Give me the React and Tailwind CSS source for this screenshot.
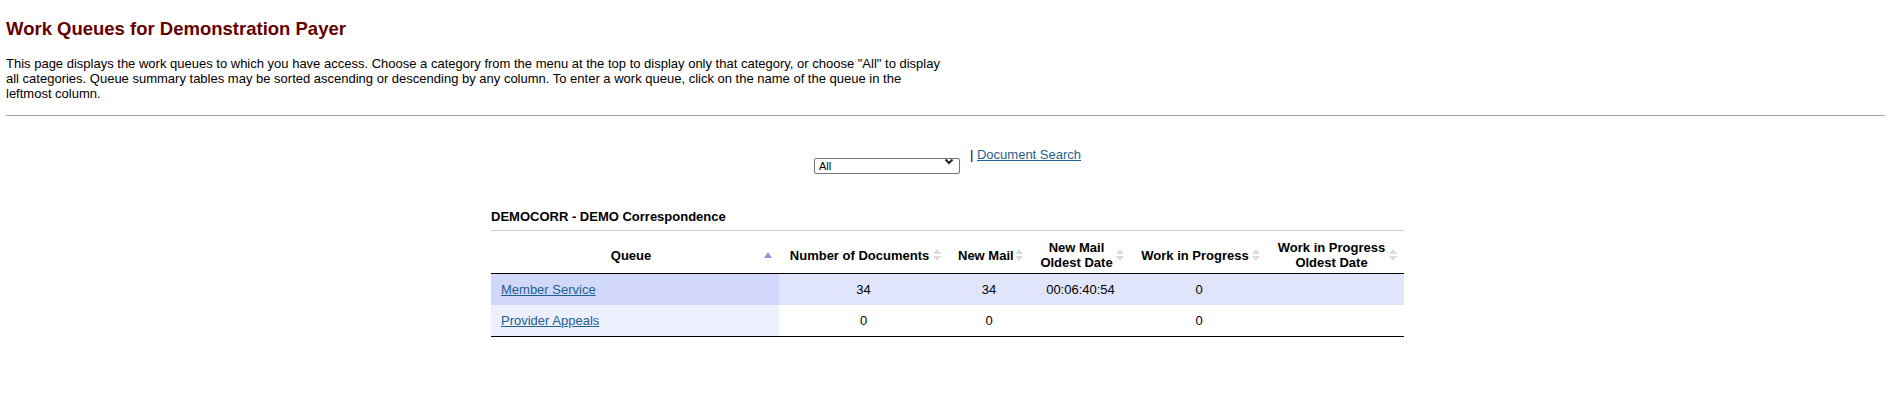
import React from "react";

const SortBoth = () => (
  <svg width="8" height="12" viewBox="0 0 8 12" className="shrink-0">
    <polygon points="4,0 8,5 0,5" fill="#dcdcdc" />
    <polygon points="0,7 8,7 4,12" fill="#dcdcdc" />
  </svg>
);

const SortAsc = () => (
  <svg width="8" height="6" viewBox="0 0 8 6" className="shrink-0">
    <polygon points="4,0 8,6 0,6" fill="#8a9bd4" />
  </svg>
);

const columns = [
  { label: ["Queue"], width: "w-[288px]", asc: true },
  { label: ["Number of Documents"], width: "w-[169px]" },
  { label: ["New Mail"], width: "w-[82px]" },
  { label: ["New Mail", "Oldest Date"], width: "w-[101px]" },
  { label: ["Work in Progress"], width: "w-[136px]" },
  { label: ["Work in Progress", "Oldest Date"], width: "w-[137px]" },
];

const rows = [
  { queue: "Member Service", docs: "34", mail: "34", oldest: "00:06:40:54", wip: "0", wipOldest: "" },
  { queue: "Provider Appeals", docs: "0", mail: "0", oldest: "", wip: "0", wipOldest: "" },
];

export default function App() {
  return (
    <div className="min-h-screen bg-white px-[6px] font-['Liberation_Sans',Arial,sans-serif] text-black">
      {/* Heading */}
      <h1 className="pt-[18px] text-[18.5px] font-bold leading-[21px] text-[#660000]">
        Work Queues for Demonstration Payer
      </h1>

      <p className="mt-[17px] w-[936px] text-[13px] leading-[15px]">
        This page displays the work queues to which you have access. Choose a category from the menu at the top to
        display only that category, or choose "All" to display all categories. Queue summary tables may be sorted
        ascending or descending by any column. To enter a work queue, click on the name of the queue in the leftmost
        column.
      </p>

      <hr className="mt-[14px] border-t border-[#a3a3a3]" />

      {/* Category filter */}
      <div className="mt-[31px] flex items-start justify-center pl-[4px]">
        <div className="relative mt-[6px]">
          <select className="h-[16px] w-[146px] appearance-none rounded-[2px] border border-[#767676] bg-white pl-[4px] text-[11px] leading-[14px] text-black outline-none">
            <option>All</option>
          </select>
          <svg
            width="10"
            height="7"
            viewBox="0 0 10 7"
            className="pointer-events-none absolute right-[6px] top-[5px]"
          >
            <polyline points="1.5,1.5 5,5 8.5,1.5" fill="none" stroke="#222" strokeWidth="2" />
          </svg>
        </div>
        <span className="ml-[10px] text-[13px] leading-[15px]">
          |{" "}
          <a href="#" className="text-[#1f6190] underline">
            Document Search
          </a>
        </span>
      </div>

      {/* Queue table */}
      <div className="mx-auto mt-[32px] w-[913px] translate-x-[2px]">
        <div className="border-b border-[#cfcfcf] pb-[6px] text-[13px] font-bold leading-[15px]">
          DEMOCORR - DEMO Correspondence
        </div>
        <table className="mt-[6px] w-[913px] table-fixed border-collapse text-[13px] leading-[15px]">
          <thead>
            <tr className="border-b border-black">
              {columns.map((col, i) => (
                <th
                  key={i}
                  className={`${col.width} relative whitespace-nowrap py-[3px] pl-[10px] pr-[18px] text-center font-bold`}
                >
                  {col.label.map((line, j) => (
                    <div key={j}>{line}</div>
                  ))}
                  <span className="absolute right-[7px] top-1/2 flex -translate-y-1/2 items-center">
                    {col.asc ? <SortAsc /> : <SortBoth />}
                  </span>
                </th>
              ))}
            </tr>
          </thead>
          <tbody className="border-b border-black">
            {rows.map((r, i) => {
              const odd = i % 2 === 0;
              return (
                <tr key={r.queue} className={odd ? "bg-[#e1e5fb]" : "bg-white"}>
                  <td className={`px-[10px] py-[8px] text-left ${odd ? "bg-[#d1d8fb]" : "bg-[#eceffd]"}`}>
                    <a href="#" className="text-[#1f6190] underline">
                      {r.queue}
                    </a>
                  </td>
                  <td className="px-[10px] py-[8px] text-center">{r.docs}</td>
                  <td className="px-[10px] py-[8px] text-center">{r.mail}</td>
                  <td className="px-[10px] py-[8px] text-center">{r.oldest}</td>
                  <td className="px-[10px] py-[8px] text-center">{r.wip}</td>
                  <td className="px-[10px] py-[8px] text-center">{r.wipOldest}</td>
                </tr>
              );
            })}
          </tbody>
        </table>
      </div>
    </div>
  );
}
